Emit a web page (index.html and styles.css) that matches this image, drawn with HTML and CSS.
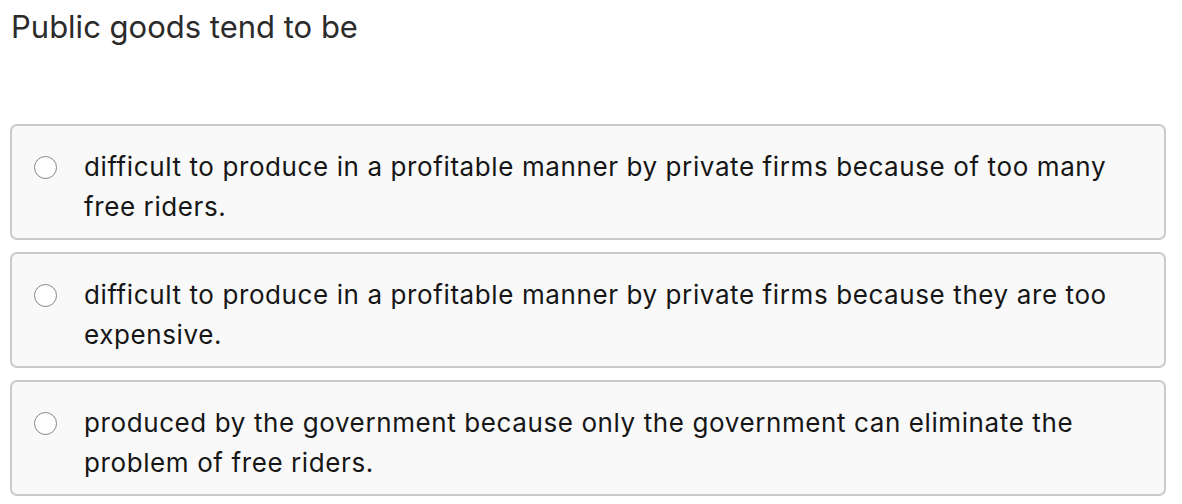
FILE: index.html
```html
<!DOCTYPE html>
<html>
<head>
<meta charset="utf-8">
<link rel="stylesheet" href="styles.css">
</head>
<body>
<div class="question">
  <h1 class="prompt">Public goods tend to be</h1>
  <div class="options">
    <label class="option"><span class="radio"></span><span class="text">difficult to produce in a profitable manner by private firms because of too many free riders.</span></label>
    <label class="option"><span class="radio"></span><span class="text">difficult to produce in a profitable manner by private firms because they are too expensive.</span></label>
    <label class="option"><span class="radio"></span><span class="text">produced by the government because only the government can eliminate the problem of free riders.</span></label>
  </div>
</div>
</body>
</html>
```
FILE: styles.css
```css
html, body {
  margin: 0;
  padding: 0;
  background: #ffffff;
}
body {
  font-family: Inter, "Open Sans", "Liberation Sans", sans-serif;
  color: #1a1a1a;
}
.question {
  padding: 6px 16px 0 10px;
}
.prompt {
  margin: 0 0 0 1px;
  font-weight: 400;
  font-size: 31px;
  line-height: 42px;
  color: #2b2b2b;
}
.options {
  margin-top: 76px;
  display: flex;
  flex-direction: column;
  gap: 12px;
}
.option {
  display: flex;
  align-items: flex-start;
  gap: 27px;
  height: 116px;
  box-sizing: border-box;
  padding: 21px 30px 0 22px;
  border: 2px solid #cbcbcb;
  border-radius: 7px;
  background: #f9f9f9;
}
.radio {
  flex: none;
  width: 23px;
  height: 23px;
  margin-top: 9px;
  box-sizing: border-box;
  border: 1.5px solid #858585;
  border-radius: 50%;
  background: #ffffff;
}
.text {
  font-size: 26px;
  line-height: 40px;
  letter-spacing: 0.6px;
  color: #161616;
}
```
